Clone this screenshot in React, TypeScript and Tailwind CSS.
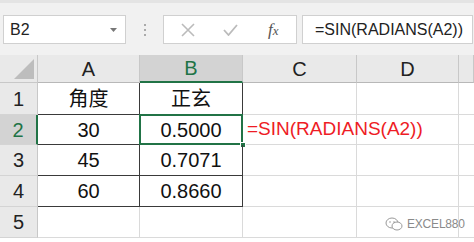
import React from 'react';

const FONT = '[font-family:"Liberation_Sans","Noto_Sans_CJK_SC",sans-serif]';

const cols = ['A', 'B', 'C', 'D', ''];

const rows = [
  { n: '1', a: '角度', b: '正玄', h: 'h-[32px]' },
  { n: '2', a: '30', b: '0.5000', h: 'h-[30px]' },
  { n: '3', a: '45', b: '0.7071', h: 'h-[31px]' },
  { n: '4', a: '60', b: '0.8660', h: 'h-[31px]' },
  { n: '5', a: '', b: '', h: 'h-[31px]' },
];

const Toolbar = () => (
  <div className="h-[55px] bg-[#f1f1f1] border-t-[3px] border-[#e4e4e4] flex items-start pt-[12px]">
    {/* name box */}
    <div className="ml-[3px] w-[123px] h-[29px] bg-white border border-[#d0d0d0] flex items-center pl-[6px] pr-[8px]">
      <span className="text-[16px] text-[#222] flex-1">B2</span>
      <svg width="7" height="4" viewBox="0 0 7 4"><path d="M0 0h7L3.5 4z" fill="#777" /></svg>
    </div>
    {/* dots */}
    <div className="w-[37px] h-[29px] flex flex-col items-center justify-center gap-[3px]">
      <span className="w-[2px] h-[2px] bg-[#aaa]" />
      <span className="w-[2px] h-[2px] bg-[#aaa]" />
      <span className="w-[2px] h-[2px] bg-[#aaa]" />
    </div>
    {/* cancel / enter / fx */}
    <div className="w-[134px] h-[29px] bg-white border border-[#d0d0d0] flex items-center">
      <svg className="ml-[17px]" width="14" height="14" viewBox="0 0 14 14">
        <path d="M1 1l12 12M13 1L1 13" stroke="#bbb" strokeWidth="1.6" />
      </svg>
      <svg className="ml-[28px]" width="15" height="12" viewBox="0 0 15 12">
        <path d="M1 6l4.5 5L14 1" stroke="#bbb" strokeWidth="1.8" fill="none" />
      </svg>
      <span className="ml-[30px] text-[17px] italic text-[#555] [font-family:'Liberation_Serif',serif]">
        f<span className="text-[13px]">x</span>
      </span>
    </div>
    {/* formula input */}
    <div className="ml-[5px] w-[171px] h-[29px] bg-white border border-[#d0d0d0] flex items-center pl-[12px]">
      <span className="text-[16px] text-[#222]">=SIN(RADIANS(A2))</span>
    </div>
  </div>
);

const Wechat = () => (
  <svg width="18" height="14" viewBox="0 0 18 14">
    <ellipse cx="7" cy="6" rx="6" ry="5" fill="#fff" stroke="#999" strokeWidth="1" />
    <ellipse cx="12" cy="9" rx="5" ry="4" fill="#fff" stroke="#999" strokeWidth="1" />
    <circle cx="5" cy="5" r="0.8" fill="#999" />
    <circle cx="9" cy="5" r="0.8" fill="#999" />
  </svg>
);

export default function App() {
  return (
    <div className={`w-[474px] h-[242px] overflow-hidden bg-white relative ${FONT}`}>
      <Toolbar />
      <div className="grid grid-cols-[38px_102px_103px_114px_102px_1fr]">
        {/* corner */}
        <div className="h-[28px] bg-[#e9e9e9] border-r border-b border-[#c8c8c8] flex items-end justify-end p-[3px]">
          <svg width="20" height="20" viewBox="0 0 20 20"><path d="M20 0V20H0z" fill="#bdbdbd" /></svg>
        </div>
        {cols.map((c) => (
          <div
            key={c || 'e'}
            className={`h-[28px] flex items-center justify-center text-[20px] border-r border-[#c8c8c8] ${
              c === 'B'
                ? 'bg-[#d3d3d3] text-[#217346] border-b-2 border-b-[#217346]'
                : 'bg-[#e9e9e9] text-[#222] border-b border-b-[#b8b8b8]'
            }`}
          >
            {c}
          </div>
        ))}

        {rows.map((r) => {
          const sel = r.n === '2';
          const inTable = r.n !== '5';
          return (
            <React.Fragment key={r.n}>
              <div
                className={`${r.h} flex items-center justify-center text-[20px] border-b border-[#d4d4d4] ${
                  sel
                    ? 'bg-[#d3d3d3] text-[#217346] border-r-2 border-r-[#217346]'
                    : 'bg-[#e9e9e9] text-[#222] border-r border-r-[#c8c8c8]'
                }`}
              >
                {r.n}
              </div>
              <div
                className={`${r.h} flex items-center justify-center text-[20px] text-[#111] border-r border-b ${
                  inTable ? 'border-[#3a3a3a]' : 'border-[#dadada]'
                }`}
              >
                {r.a}
              </div>
              <div
                className={`${r.h} relative flex items-center justify-center text-[20px] text-[#111] border-r border-b ${
                  inTable ? 'border-[#3a3a3a]' : 'border-[#dadada]'
                }`}
              >
                {r.b}
                {sel && (
                  <>
                    <div className="absolute -left-[1px] -top-[1px] -right-[1px] -bottom-[1px] border-2 border-[#217346]" />
                    <div className="absolute -right-[4px] -bottom-[4px] w-[6px] h-[6px] bg-[#217346] border border-white" />
                  </>
                )}
              </div>
              <div className={`${r.h} border-r border-b border-[#dadada] flex items-center pl-[4px]`}>
                {sel && (
                  <span className="text-[19px] text-[#ee1c25] whitespace-nowrap">=SIN(RADIANS(A2))</span>
                )}
              </div>
              <div className={`${r.h} border-r border-b border-[#dadada]`} />
              <div className={`${r.h} border-b border-[#dadada]`} />
            </React.Fragment>
          );
        })}
      </div>

      <div className="absolute left-[385px] top-[215px] flex items-center gap-[4px]">
        <Wechat />
        <span className="text-[12px] text-[#8a8a8a] tracking-[-0.2px] [text-shadow:0_0_2px_#fff]">EXCEL880</span>
      </div>
    </div>
  );
}
